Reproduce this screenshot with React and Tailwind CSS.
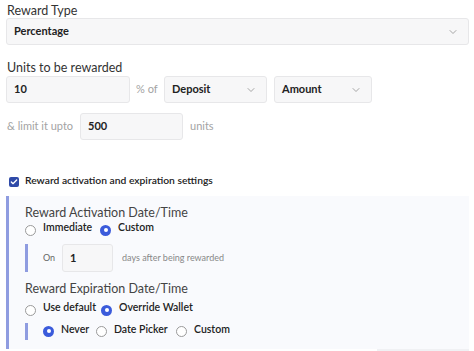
import { ChevronDown, Check } from 'lucide-react';

const font = { fontFamily: 'Lato, "Open Sans", sans-serif' };

// Select box used for the dropdowns
const Select = ({ value, className }) => (
  <div className={`flex items-center justify-between h-[27px] rounded-[3px] border border-[#e7e7e9] bg-[#f7f7f8] pl-[7px] pr-[9px] ${className}`}>
    <span className="text-[11px] font-bold text-[#222]">{value}</span>
    <ChevronDown size={12} strokeWidth={1.5} className="text-[#8a8a8a]" />
  </div>
);

const Input = ({ value, className }) => (
  <div className={`flex items-center h-[27px] rounded-[3px] border border-[#e7e7e9] bg-[#f7f7f8] px-[7px] text-[11px] font-bold text-[#222] ${className}`}>
    {value}
  </div>
);

const Radio = ({ checked, label, className }) => (
  <label className={`flex shrink-0 items-center gap-[7px] text-[10.5px] font-semibold text-[#222] whitespace-nowrap ${className}`}>
    {checked ? (
      <span className="flex shrink-0 items-center justify-center w-[11px] h-[11px] rounded-full bg-[#3b5bdb]">
        <span className="w-[4px] h-[4px] rounded-full bg-white" />
      </span>
    ) : (
      <span className="shrink-0 w-[11px] h-[11px] rounded-full border border-[#9a9a9a] bg-white" />
    )}
    <span className="-mt-[4px]">{label}</span>
  </label>
);

export default function App() {
  return (
    <div className="w-[474px] h-[351px] bg-white overflow-hidden pl-[6px] pr-[5px]" style={font}>
      <div className="text-[12.5px] text-[#333] pt-[3px] pl-[1px] leading-[16px]">Reward Type</div>
      <Select value="Percentage" className="mt-[-1px] w-full" />

      <div className="text-[12.5px] text-[#333] mt-[15px] pl-[1px] leading-[16px]">Units to be rewarded</div>
      <div className="flex items-center mt-[0px]">
        <Input value="10" className="w-[124px]" />
        <span className="ml-[6px] w-[28px] text-[11px] text-[#a3a3a3]">% of</span>
        <Select value="Deposit" className="w-[103px]" />
        <Select value="Amount" className="ml-[7px] w-[98px]" />
      </div>

      <div className="flex items-center mt-[10px]">
        <span className="pl-[1px] w-[74px] text-[11px] text-[#a3a3a3]">&amp; limit it upto</span>
        <Input value="500" className="w-[103px]" />
        <span className="ml-[7px] text-[11px] text-[#a3a3a3]">units</span>
      </div>

      <div className="flex items-center gap-[6px] mt-[35px] pl-[3px]">
        <span className="flex items-center justify-center w-[10px] h-[10px] rounded-[2px] bg-[#2f4aa8]">
          <Check size={8} strokeWidth={4} className="text-white" />
        </span>
        <span className="text-[10.3px] font-semibold text-[#222] -mt-[2px]">Reward activation and expiration settings</span>
      </div>

      <div className="mt-[8px] border-l-[3px] border-[#8f9ce0] bg-[#f9fafd] pl-[16px] pt-[9px] pb-[9px]">
        <div className="text-[12.5px] text-[#444] leading-[16px]">Reward Activation Date/Time</div>
        <div className="flex items-center mt-[3px]">
          <Radio label="Immediate" className="w-[75px]" />
          <Radio checked label="Custom" />
        </div>
        <div className="flex items-center mt-[8px] border-l-[3px] border-[#8f9ce0] h-[28px]">
          <span className="ml-[15px] w-[19px] text-[9px] text-[#666]">On</span>
          <Input value="1" className="w-[51px] h-[28px] bg-[#f5f5f6]" />
          <span className="ml-[9px] text-[9px] text-[#888]">days after being rewarded</span>
        </div>

        <div className="text-[12.5px] text-[#444] leading-[16px] mt-[9px]">Reward Expiration Date/Time</div>
        <div className="flex items-center mt-[7px]">
          <Radio label="Use default" className="w-[76px]" />
          <Radio checked label="Override Wallet" />
        </div>
        <div className="flex items-center mt-[7px] border-l-[3px] border-[#8f9ce0] h-[17px] pl-[15px]">
          <Radio checked label="Never" className="w-[53px]" />
          <Radio label="Date Picker" className="w-[80px]" />
          <Radio label="Custom" />
        </div>
      </div>
      <div className="ml-[371px] w-[92px] h-[4px] bg-[#f0f1f4]" />
    </div>
  );
}
